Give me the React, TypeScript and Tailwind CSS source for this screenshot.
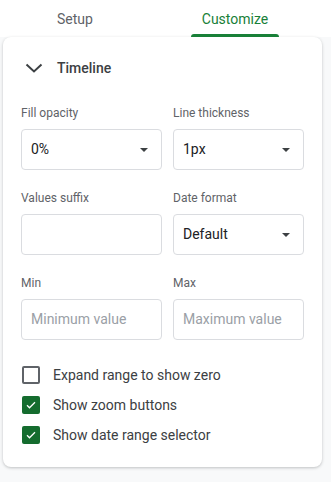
import { useState } from 'react';

function Caret() {
  return (
    <svg width="8" height="4" viewBox="0 0 8 4" className="shrink-0">
      <path d="M0 0l4 4 4-4z" fill="#3c4043" />
    </svg>
  );
}

function SelectBox({ value }: { value: string }) {
  return (
    <div className="h-[41px] rounded border border-[#dadce0] flex items-center justify-between pl-[9px] pr-[13px]">
      <span className="text-[14px] text-[#202124]">{value}</span>
      <Caret />
    </div>
  );
}

function TextBox({ placeholder }: { placeholder?: string }) {
  return (
    <div className="h-[41px] rounded border border-[#dadce0] flex items-center px-[9px]">
      <span className="text-[14px] text-[#9aa0a6]">{placeholder}</span>
    </div>
  );
}

function Field({ label, children }: { label: string; children: React.ReactNode }) {
  return (
    <div className="flex flex-col">
      <div className="text-[12px] text-[#5f6368] h-[17px] leading-[17px] mt-[2px] mb-[7px]">{label}</div>
      {children}
    </div>
  );
}

function Checkbox({ checked, label }: { checked: boolean; label: string }) {
  return (
    <div className="flex items-center h-[30px]">
      <div
        className={
          checked
            ? 'w-[18px] h-[18px] rounded-[2px] bg-[#146c2e] flex items-center justify-center'
            : 'w-[18px] h-[18px] rounded-[2px] border-2 border-[#5f6368]'
        }
      >
        {checked && (
          <svg width="12" height="12" viewBox="0 0 24 24">
            <path d="M4 12.5l5 5L20 6.5" stroke="#fff" strokeWidth="2.6" fill="none" />
          </svg>
        )}
      </div>
      <span className="ml-[13px] text-[14px] text-[#3c4043]">{label}</span>
    </div>
  );
}

export default function App() {
  const [tab] = useState('Customize');
  return (
    <div className="w-[331px] h-[482px] bg-[#f8f9fa] font-['Roboto',sans-serif] overflow-hidden">
      <div className="flex h-[37px] bg-white">
        <div className="w-[150px] flex flex-col items-center">
          <div className="pt-[9px] text-[14px] text-[#5f6368]">Setup</div>
        </div>
        <div className="w-[170px] flex flex-col items-center">
          <div className={tab === 'Customize' ? 'pt-[9px] text-[14px] text-[#188038]' : ''}>Customize</div>
          <div className="mt-[4px] w-[88px] h-[3px] rounded-t bg-[#188038]" />
        </div>
      </div>
      <div className="ml-[3px] w-[319px] h-[430px] bg-white rounded-lg shadow-[0_1px_3px_rgba(60,64,67,0.3)] pt-[22px] px-[18px]">
        <div className="flex items-center h-[18px] pl-[4px]">
          <svg width="18" height="10" viewBox="0 0 18 10">
            <path d="M1.5 1.5l7.5 7 7.5-7" stroke="#3c4043" strokeWidth="2" fill="none" />
          </svg>
          <span className="ml-[14px] text-[14px] font-medium text-[#3c4043]">Timeline</span>
        </div>
        <div className="grid grid-cols-[141px_131px] gap-x-[11px] gap-y-[18px] mt-[26px]">
          <Field label="Fill opacity"><SelectBox value="0%" /></Field>
          <Field label="Line thickness"><SelectBox value="1px" /></Field>
          <Field label="Values suffix"><TextBox /></Field>
          <Field label="Date format"><SelectBox value="Default" /></Field>
          <Field label="Min"><TextBox placeholder="Minimum value" /></Field>
          <Field label="Max"><TextBox placeholder="Maximum value" /></Field>
        </div>
        <div className="mt-[20px] pl-[1px]">
          <Checkbox checked={false} label="Expand range to show zero" />
          <Checkbox checked label="Show zoom buttons" />
          <Checkbox checked label="Show date range selector" />
        </div>
      </div>
    </div>
  );
}
